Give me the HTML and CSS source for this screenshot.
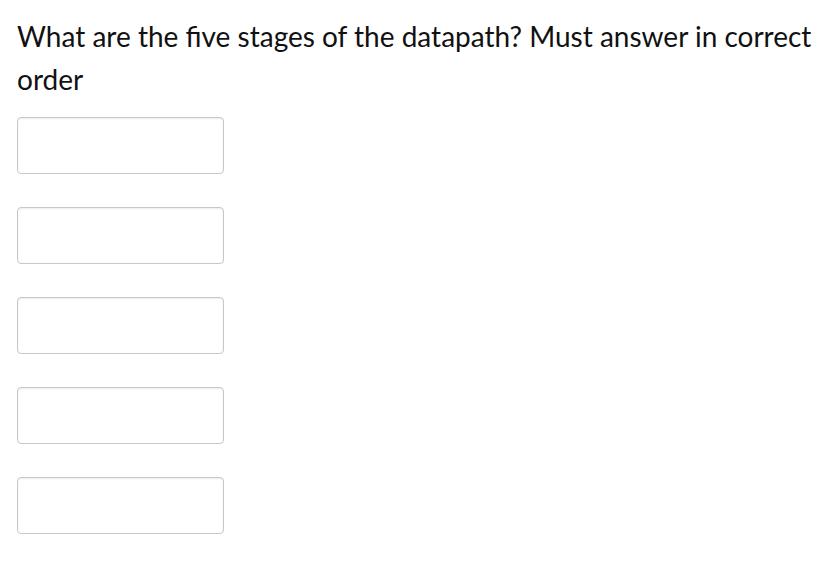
FILE: index.html
```html
<!DOCTYPE html>
<html>
<head>
<meta charset="utf-8">
<link rel="stylesheet" href="styles.css">
</head>
<body>
<div class="question">
  <p class="prompt">What are the five stages of the datapath? Must answer in correct order</p>
  <div class="answers">
    <input class="answer" type="text" aria-label="Stage 1">
    <input class="answer" type="text" aria-label="Stage 2">
    <input class="answer" type="text" aria-label="Stage 3">
    <input class="answer" type="text" aria-label="Stage 4">
    <input class="answer" type="text" aria-label="Stage 5">
  </div>
</div>
</body>
</html>
```
FILE: styles.css
```css
html, body {
  margin: 0;
  padding: 0;
  background: #ffffff;
}
.question {
  padding: 15px 17px 0 17px;
  font-family: Lato, "Liberation Sans", sans-serif;
  color: #111111;
}
.prompt {
  margin: 0;
  font-size: 28px;
  line-height: 43px;
}
.answers {
  display: flex;
  flex-direction: column;
  align-items: flex-start;
  gap: 33px;
  margin-top: 16px;
}
.answer {
  box-sizing: border-box;
  width: 207px;
  height: 57px;
  margin: 0;
  padding: 4px 8px;
  border: 1px solid #c8c8c8;
  border-radius: 4px;
  background: #ffffff;
  box-shadow: inset 0 1px 2px rgba(0,0,0,0.08);
  font-family: Lato, sans-serif;
  font-size: 16px;
}
```
